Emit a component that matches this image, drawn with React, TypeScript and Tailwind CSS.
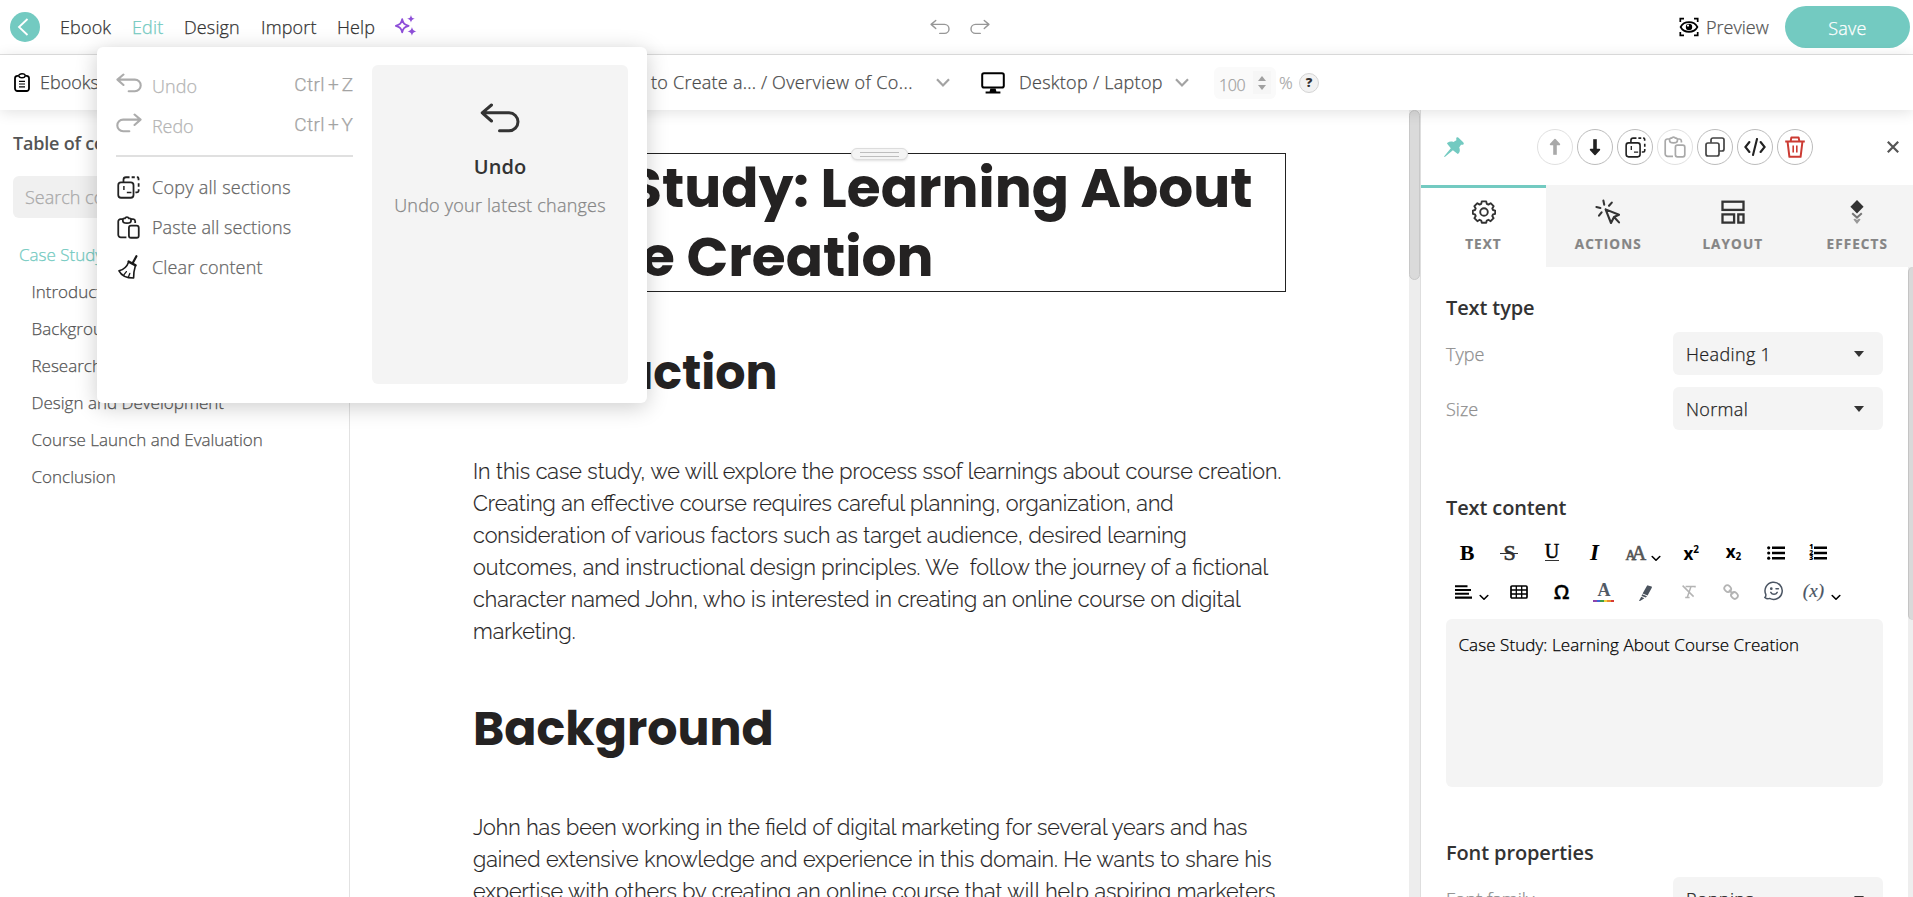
import type { ReactNode } from "react";

function UndoIcon({ className = "", stroke = 3 }: { className?: string; stroke?: number }) {
  return (
    <svg viewBox="0 0 40 30" className={className} fill="none" stroke="currentColor" strokeWidth={stroke} strokeLinecap="round" strokeLinejoin="round">
      <path d="M11.5 2 L2.2 9.8 L11.5 18 M2.2 9.8 H29 a9 9 0 0 1 0 18 H19.5" />
    </svg>
  );
}

function Chevron({ className = "" }: { className?: string }) {
  return (
    <svg viewBox="0 0 14 9" className={className} fill="none" stroke="currentColor" strokeWidth="2.2">
      <path d="M1 1.2 L7 7.4 L13 1.2" />
    </svg>
  );
}

function SmallChevron() {
  return (
    <svg viewBox="0 0 10 7" className="mt-[11px] h-[7px] w-[10px] shrink-0" fill="none" stroke="#000" strokeWidth="1.6" strokeLinecap="round" strokeLinejoin="round">
      <path d="M1.2 1.5 L5 5.2 L8.8 1.5" />
    </svg>
  );
}

function CopySectionsIcon({ className = "" }: { className?: string }) {
  return (
    <svg viewBox="0 0 22 22" className={className} fill="none" stroke="currentColor" strokeWidth="1.7">
      <rect x="1.2" y="6.2" width="14.6" height="14.6" rx="2.6" />
      <path d="M6.2 6 V3.6 a2.4 2.4 0 0 1 2.4 -2.4 H12 M14 1.2 h3 M19 1.2 h0.4 a1.2 1.2 0 0 1 1.2 1.2 V4 M20.7 7 v3.2 M20.7 12.6 v1.6 a1.5 1.5 0 0 1 -1.5 1.5 h-1.6" />
      <path d="M6.6 9.5 v4 M9.4 15.8 h4.4" strokeWidth="1.4" />
    </svg>
  );
}

function PasteSectionsIcon({ className = "" }: { className?: string }) {
  return (
    <svg viewBox="0 0 22 22" className={className} fill="none" stroke="currentColor" strokeWidth="1.7" strokeLinejoin="round">
      <path d="M5.6 3 H3.4 a2.2 2.2 0 0 0 -2.2 2.2 V18 a2.4 2.4 0 0 0 2.4 2.4 H9 M13.4 3 h2 a2.2 2.2 0 0 1 2 2 V6.6" />
      <path d="M5.6 4.8 a3.8 2 0 0 0 7.8 0 V3.4 a1.2 1.2 0 0 0 -1.2 -1.2 h-.8 a2 1.5 0 0 0 -3.8 0 h-.8 a1.2 1.2 0 0 0 -1.2 1.2 Z" />
      <rect x="11.4" y="9.2" width="9.4" height="11.6" rx="2" />
    </svg>
  );
}

function BroomIcon() {
  return (
    <svg viewBox="0 0 20 24" className="h-6 w-5" fill="none" stroke="#1a1a1a" strokeLinejoin="round" strokeLinecap="round">
      <path d="M18.4 1.2 L15 7.6" strokeWidth="2.2" />
      <path d="M10.6 6.6 L17.6 10.4" strokeWidth="2.4" />
      <path d="M10.4 7.4 C9 11.5 5.5 14.5 1 15.8 C3.4 20.5 9 23 15.6 23 C15.6 19 16 15 17.2 11.4" strokeWidth="1.6" />
      <path d="M6 19.6 l2.4 -3 M10.6 21.6 l1.2 -3.2" strokeWidth="1.3" />
    </svg>
  );
}

function ClipboardIcon() {
  return (
    <svg viewBox="0 0 16 19" className="h-[19px] w-4" fill="none" stroke="#000" strokeWidth="1.8">
      <path d="M4.6 2.8 H3.4 a2.4 2.4 0 0 0 -2.4 2.4 V15.6 a2.4 2.4 0 0 0 2.4 2.4 H12.6 a2.4 2.4 0 0 0 2.4 -2.4 V5.2 a2.4 2.4 0 0 0 -2.4 -2.4 H11.4" />
      <path d="M4.8 2.6 a3.2 1.8 0 0 1 6.4 0 a3.2 2.2 0 0 1 -6.4 0 Z" strokeWidth="1.4" />
      <path d="M5 8.4 H11 M5 11 H11 M5 13.8 H11" strokeWidth="1.2" />
    </svg>
  );
}

function PreviewIcon() {
  return (
    <svg viewBox="0 0 20 20" className="h-5 w-5" fill="none" stroke="#000" strokeWidth="1.7">
      <path d="M1.3 5 V1.7 H5 M15 1.7 H18.7 V5 M18.7 15 V18.3 H15 M5 18.3 H1.3 V15" />
      <path d="M1.6 10 C5 3.6 15 3.6 18.4 10 C15 16.4 5 16.4 1.6 10 Z" />
      <circle cx="10" cy="10" r="3.2" fill="#000" stroke="none" />
      <circle cx="9" cy="8.6" r="1.1" fill="#fff" stroke="none" />
    </svg>
  );
}

function MenuRow({ icon, label, keys, className }: { icon: ReactNode; label: string; keys?: string; className: string }) {
  return (
    <div className="flex h-10 items-center">
      <span className="flex w-9 shrink-0 justify-start">{icon}</span>
      <span className={className}>{label}</span>
      {keys ? (
        <span className="ml-auto flex items-center gap-[3px] pt-px font-['Roboto'] text-[19px] font-light text-[#a3a3a3]">
          <span className="tracking-[0.4px]">Ctrl</span>
          <span>+</span>
          <span>{keys}</span>
        </span>
      ) : null}
    </div>
  );
}

function EditMenu() {
  return (
    <div className="absolute top-[47px] left-[97px] z-20 flex h-[356px] w-[550px] rounded-md bg-white pt-[18px] pl-[19px] shadow-[0_4px_22px_rgba(0,0,0,0.2)]">
      <div className="w-[237px]">
        <MenuRow icon={<UndoIcon className="mb-1 h-[20px] w-[26px] text-[#acacac]" stroke={3.2} />} label="Undo" keys="Z" className="pt-[3px] text-[18px] text-[#b4b4b4] tracking-[0.1px]" />
        <MenuRow icon={<UndoIcon className="mb-1 h-[20px] w-[26px] -scale-x-100 text-[#acacac]" stroke={3.2} />} label="Redo" keys="Y" className="pt-[3px] text-[18px] text-[#b4b4b4] tracking-[-0.1px]" />
        <div className="mt-[10px] mb-[10px] h-[2px] bg-[#e0e0e0]" />
        <MenuRow icon={<CopySectionsIcon className="ml-[1px] h-[23px] w-[23px] text-[#222]" />} label="Copy all sections" className="text-[18px] tracking-[0.27px] text-[#666]" />
        <MenuRow icon={<PasteSectionsIcon className="ml-[1px] h-[23px] w-[23px] text-[#222]" />} label="Paste all sections" className="text-[18px] tracking-[0.07px] text-[#666]" />
        <MenuRow icon={<span className="ml-[2px]"><BroomIcon /></span>} label="Clear content" className="text-[18px] tracking-[0.15px] text-[#666]" />
      </div>
      <div className="ml-[19px] flex h-[319px] w-[256px] flex-col items-center rounded-md bg-[#f4f4f4] pt-[38px]">
        <UndoIcon className="h-[30px] w-10 text-[#333]" stroke={3} />
        <div className="mt-[19px] text-[20px] leading-[30px] font-semibold tracking-[0.1px] text-[#333] [-webkit-text-stroke:0]">Undo</div>
        <div className="mt-[8px] text-[18px] leading-[30px] tracking-[0.23px] whitespace-nowrap text-[#868686]">Undo your latest changes</div>
      </div>
    </div>
  );
}

function TopBar() {
  return (
    <header className="flex h-[55px] shrink-0 items-center border-b border-[#e2e2e2] pr-[3px] pl-[10px]">
      <div className="flex h-[30px] w-[30px] items-center justify-center rounded-full bg-[#73cac1]">
        <svg viewBox="0 0 12 18" className="mr-[3px] h-[18px] w-3" fill="none" stroke="#fff" strokeWidth="1.8">
          <path d="M10.5 1 L2 9 L10.5 17" />
        </svg>
      </div>
      <nav className="ml-5 flex text-[18px] tracking-[0.15px] text-[#333]">
        <span className="w-[72px]">Ebook</span>
        <span className="w-[52px] text-[#73cac1]">Edit</span>
        <span className="w-[77px]">Design</span>
        <span className="w-[76px]">Import</span>
        <span className="w-[58px]">Help</span>
      </nav>
      <svg viewBox="0 0 22 22" className="-mt-[3px] h-[22px] w-[22px]" fill="#8e4fd8">
        <path d="M7.2 4.2 C8.1 8.3 9.2 9.6 13.6 10.8 C9.2 12 8.1 13.3 7.2 17.4 C6.3 13.3 5.2 12 0.8 10.8 C5.2 9.6 6.3 8.3 7.2 4.2 Z" fill="none" stroke="#8e4fd8" strokeWidth="1.8" strokeLinejoin="round" />
        <path d="M16 0 C16.6 2.6 17.2 3.2 19.8 3.8 C17.2 4.4 16.6 5 16 7.6 C15.4 5 14.8 4.4 12.2 3.8 C14.8 3.2 15.4 2.6 16 0 Z" />
        <path d="M17 12 C17.7 15 18.5 15.7 21.5 16.4 C18.5 17.1 17.7 17.8 17 20.8 C16.3 17.8 15.5 17.1 12.5 16.4 C15.5 15.7 16.3 15 17 12 Z" />
      </svg>
      <div className="ml-[513px] flex w-[750px] gap-5 text-[#979797]">
        <UndoIcon className="h-4 w-5" stroke={2.8} />
        <UndoIcon className="h-4 w-5 -scale-x-100" stroke={2.8} />
      </div>
      <div className="ml-auto flex items-center">
        <PreviewIcon />
        <span className="ml-[7px] w-[79px] text-[18px] text-[#555]">Preview</span>
        <button className="h-[42px] w-[125px] rounded-full bg-[#73cac1] pt-[2px] text-[18px] tracking-[0.2px] text-white">Save</button>
      </div>
    </header>
  );
}

function SubBar() {
  return (
    <div className="relative z-10 flex h-[55px] shrink-0 items-center bg-white text-[18px] whitespace-nowrap text-[#4a4a4a] shadow-[0_2px_14px_rgba(0,0,0,0.12)]">
      <span className="ml-[14px]"><ClipboardIcon /></span>
      <span className="ml-[10px] w-[611px]">Ebooks</span>
      <span className="w-[110px] tracking-[0.25px]">to Create a...</span>
      <span className="w-[11px]">/</span>
      <span className="w-[164px] tracking-[0.4px]">Overview of Co...</span>
      <Chevron className="h-[9px] w-[14px] text-[#a3a3a3]" />
      <svg viewBox="0 0 24 22" className="ml-[31px] h-[22px] w-6">
        <rect x="1.2" y="1.2" width="21.6" height="14.4" rx="1.8" fill="none" stroke="#000" strokeWidth="2" />
        <path d="M9.4 16.5 h5.2 l.8 3 h4 v2 H4.6 v-2 h4 Z" />
      </svg>
      <span className="ml-[14px] w-[156px] tracking-[0.28px]">Desktop / Laptop</span>
      <Chevron className="h-[9px] w-[14px] text-[#a3a3a3]" />
      <div className="ml-[25px] flex h-8 w-[62px] items-center rounded-md bg-[#fafafa] pl-[5px]">
        <span className="w-[34px] pt-[4px] text-[16px] tracking-[-0.4px] text-[#a0a0a0]">100</span>
        <span className="flex h-[23px] w-[18px] flex-col items-center justify-center gap-1 bg-[#f6f6f6]">
          <svg viewBox="0 0 8 5" className="h-[5px] w-2" fill="#a0a0a0"><path d="M0 5 L4 0 L8 5 Z" /></svg>
          <svg viewBox="0 0 8 5" className="h-[5px] w-2" fill="#a0a0a0"><path d="M0 0 L4 5 L8 0 Z" /></svg>
        </span>
      </div>
      <span className="ml-[3px] w-5 text-[17px] text-[#a8a8a8]">%</span>
      <span className="flex h-5 w-5 items-center justify-center rounded-full border border-[#d4d4d4] bg-[#f2f2f2] text-[13px] leading-none font-extrabold text-[#333] [-webkit-text-stroke:0]">?</span>
    </div>
  );
}

const chapters = ["Introduction", "Background", "Research and Analysis", "Design and Development", "Course Launch and Evaluation", "Conclusion"];

function Sidebar() {
  return (
    <aside className="flex w-[350px] shrink-0 flex-col border-r border-[#e2e2e2] pt-[18px] pr-[13px] pl-[13px]">
      <div className="text-[18px] leading-[30px] font-semibold tracking-[-0.2px] text-[#555] [-webkit-text-stroke:0]">Table of contents</div>
      <div className="mt-[18px] flex h-[42px] items-center rounded-md bg-[#f0f0f0] pl-3 text-[18px] text-[#a9a9a9]">Search content</div>
      <div className="mt-[18px] pl-[6px] text-[17px] leading-[37px] whitespace-nowrap text-[#555]">
        <div className="text-[#73cac1]">Case Study: Learning About Course</div>
        <div className="pl-[12.5px]">
          {chapters.map((c) => (
            <div key={c}>{c}</div>
          ))}
        </div>
      </div>
    </aside>
  );
}

function Document() {
  return (
    <main className="flex min-w-0 flex-1 flex-col pt-[43px] pl-[122px] whitespace-nowrap text-[#242222] [-webkit-text-stroke:0]">
      <section className="relative h-[139px] w-[814px] border border-[#222] font-['Poppins','Inter',sans-serif] text-[54.93px] leading-[69px] font-bold">
        <div className="absolute -top-[6px] left-[378px] flex h-[12px] w-[57px] flex-col items-center justify-center gap-[3px] rounded-full border border-[#dcdcdc] bg-[#f4f4f4] shadow-sm">
          <span className="h-px w-[39px] bg-[#bdbdbd]" />
          <span className="h-px w-[39px] bg-[#bdbdbd]" />
        </div>
        <div className="-mt-px">Case Study: Learning About</div>
        <div>Course Creation</div>
      </section>
      <div className="pl-[1px]">
        <h2 className="mt-[51px] font-['Poppins','Inter',sans-serif] text-[47.5px] leading-[60px] font-bold">Introduction</h2>
        <div className="mt-[53px] font-['Raleway','Lato',sans-serif] text-[21.54px] leading-8 font-light [-webkit-text-stroke:0.2px]">
          <p>In this case study, we will explore the process ssof learnings about course creation.</p>
          <p>Creating an effective course requires careful planning, organization, and</p>
          <p>consideration of various factors such as target audience, desired learning</p>
          <p>outcomes, and instructional design principles. We&nbsp; follow the journey of a fictional</p>
          <p>character named John, who is interested in creating an online course on digital</p>
          <p>marketing.</p>
        </div>
        <h2 className="mt-[51px] font-['Poppins','Inter',sans-serif] text-[47.5px] leading-[60px] font-bold">Background</h2>
        <div className="mt-[53px] font-['Raleway','Lato',sans-serif] text-[21.54px] leading-8 font-light [-webkit-text-stroke:0.2px]">
          <p>John has been working in the field of digital marketing for several years and has</p>
          <p>gained extensive knowledge and experience in this domain. He wants to share his</p>
          <p>expertise with others by creating an online course that will help aspiring marketers</p>
        </div>
      </div>
    </main>
  );
}

function RoundButton({ faded = false, children }: { faded?: boolean; children: ReactNode }) {
  return (
    <button className={faded ? "flex h-9 w-9 items-center justify-center rounded-full border border-[#e0e0e0] text-[#a9a9a9]" : "flex h-9 w-9 items-center justify-center rounded-full border border-[#bcbcbc] text-[#222]"}>
      {children}
    </button>
  );
}

function PanelHeader() {
  return (
    <div className="flex h-[75px] shrink-0 items-center pr-[14px] pb-px pl-[23px]">
      <svg viewBox="0 0 20 20" className="h-5 w-5" fill="#73cac1">
        <path d="M12.6 0.6 C13.3 -0.1 14.3 0.3 14.8 0.9 L19.2 5.3 C19.9 6 20.1 7.2 19.2 7.6 C18.4 8 17.5 7.6 17 7.7 L15.2 10.6 C16.2 12.6 16 15 14.4 16.6 C13.9 17.1 13.5 16.9 13.1 16.5 L8.9 13.2 L0.8 20 L0 19.4 L6.8 11.2 L3.4 7 C2.9 6.5 3 6.1 3.5 5.8 C5.3 4.4 7.4 4.2 9.4 5 L12.4 3.2 C12.4 2.3 11.9 1.4 12.6 0.6 Z" />
      </svg>
      <div className="ml-[73px] flex gap-1">
        <RoundButton faded>
          <svg viewBox="0 0 12 18" className="h-[18px] w-3" fill="none" stroke="currentColor" strokeLinejoin="round">
            <path d="M6 16.8 V6" strokeWidth="3.6" /><path d="M1.6 6.4 L6 1.6 L10.4 6.4 Z" fill="currentColor" strokeWidth="1.6" />
          </svg>
        </RoundButton>
        <RoundButton>
          <svg viewBox="0 0 12 18" className="h-[18px] w-3" fill="none" stroke="currentColor" strokeLinejoin="round">
            <path d="M6 1.2 V12" strokeWidth="3.6" /><path d="M1.6 11.6 L6 16.4 L10.4 11.6 Z" fill="currentColor" strokeWidth="1.6" />
          </svg>
        </RoundButton>
        <RoundButton><CopySectionsIcon className="h-[21px] w-[21px]" /></RoundButton>
        <RoundButton faded><PasteSectionsIcon className="h-[22px] w-[22px]" /></RoundButton>
        <RoundButton>
          <svg viewBox="0 0 20 20" className="h-5 w-5" fill="none" stroke="#444" strokeWidth="1.7">
            <rect x="1" y="6" width="13" height="13" rx="2" />
            <path d="M6 5.8 V3 a2 2 0 0 1 2 -2 H17 a2 2 0 0 1 2 2 V12 a2 2 0 0 1 -2 2 H14.2" />
          </svg>
        </RoundButton>
        <RoundButton>
          <svg viewBox="0 0 22 18" className="h-[18px] w-[22px]" fill="none" stroke="currentColor" strokeWidth="2.1" strokeLinecap="round">
            <path d="M5.4 4 L1.4 9 L5.4 14 M16.6 4 L20.6 9 L16.6 14 M13 1 L9 17" />
          </svg>
        </RoundButton>
        <RoundButton>
          <svg viewBox="0 0 20 22" className="-mt-[1px] h-[22px] w-5" fill="none" stroke="#cc3b33" strokeWidth="2" strokeLinejoin="round">
            <path d="M0.2 5.6 H19.8 M5.6 5.4 L6.4 1.4 H13.6 L14.4 5.4 M2.6 6 L4.4 20.8 H15.6 L17.4 6" />
            <path d="M8.2 9.6 V16.6 M11.8 9.6 V16.6" strokeWidth="1.6" />
          </svg>
        </RoundButton>
      </div>
      <svg viewBox="0 0 12 12" className="ml-auto h-3 w-3" fill="none" stroke="#555" strokeWidth="2.2">
        <path d="M0.8 0.8 L11.2 11.2 M11.2 0.8 L0.8 11.2" />
      </svg>
    </div>
  );
}

function Tab({ label, active = false, children }: { label: string; active?: boolean; children: ReactNode }) {
  return (
    <div className={active ? "flex w-[125px] shrink-0 flex-col items-center border-t-[3px] border-[#73cac1] bg-white pt-3" : "flex w-[124.5px] shrink-0 flex-col items-center bg-[#f4f4f4] pt-[15px]"}>
      {children}
      <span className="mt-2 text-[13.5px] leading-[24px] font-bold tracking-[1.1px] text-[#858585] [-webkit-text-stroke:0.2px]">{label}</span>
    </div>
  );
}

function Tabs() {
  return (
    <div className="flex h-[82px] shrink-0 overflow-hidden bg-[#f4f4f4]">
      <Tab label="TEXT" active>
        <svg viewBox="0 0 24 24" className="h-6 w-6" fill="none" stroke="#333" strokeWidth="1.9" strokeLinejoin="round">
          <path d="M9.8 1.4 h4.4 l.6 2.5 1.6 .7 2.2 -1.4 3 3 -1.3 2.2 .7 1.6 2.2 .6 v3.2 l-2.2 .6 -.7 1.6 1.3 2.2 -3 3 -2.2 -1.4 -1.6 .7 -.6 2.3 h-4.4 l-.6 -2.3 -1.6 -.7 -2.2 1.4 -3 -3 1.3 -2.2 -.7 -1.6 -2.2 -.6 v-3.2 l2.2 -.6 .7 -1.6 -1.3 -2.2 3 -3 2.2 1.4 1.6 -.7 Z" />
          <circle cx="12" cy="12" r="3.8" />
        </svg>
      </Tab>
      <Tab label="ACTIONS">
        <svg viewBox="0 0 26 26" className="-mt-px mb-[-1px] h-[26px] w-[26px]" fill="none" stroke="#333" strokeWidth="2.1" strokeLinejoin="round" strokeLinecap="round">
          <path d="M10.6 10.4 L24 15.8 L19 18 L24 23.4 M19 18 L16 24 L10.6 10.4" />
          <path d="M8.4 1.6 L9.2 5.6 M16.8 3.6 L14 6.8 M1.4 8 L5.4 9 M6.6 13.4 L4 16.6" />
        </svg>
      </Tab>
      <Tab label="LAYOUT">
        <svg viewBox="0 0 24 24" className="h-6 w-6" fill="none" stroke="#333" strokeWidth="2.3">
          <rect x="1.5" y="1.7" width="21" height="8.2" /><rect x="1.5" y="14.4" width="11.6" height="8.2" /><rect x="17.3" y="14.4" width="5.2" height="8.2" />
        </svg>
      </Tab>
      <Tab label="EFFECTS">
        <svg viewBox="0 0 14 24" className="h-6 w-[14px]">
          <path d="M7 0 L13.6 6.8 L7 13.4 L.4 6.8 Z" fill="#333" />
          <path d="M2.2 13.2 L7 17.6 L11.8 13.2" fill="none" stroke="#777" strokeWidth="2" />
          <path d="M3.4 19.6 L5 18.6 L7 20 L9 18.6 L10.6 19.6 L7 24 Z" fill="#999" />
        </svg>
      </Tab>
    </div>
  );
}

function Field({ label, value, className = "" }: { label: string; value: string; className?: string }) {
  return (
    <div className={`flex h-[43px] items-center justify-between text-[18px] ${className}`}>
      <span className="pt-px text-[#8f8f8f]">{label}</span>
      <div className="flex h-full w-[210px] items-center justify-between rounded-md bg-[#f4f4f4] pt-px pr-[19px] pl-[13px] tracking-[0.35px] text-[#222]">
        <span>{value}</span>
        <svg viewBox="0 0 10 6" className="h-[6px] w-[10px]" fill="#333"><path d="M0 0 H10 L5 6 Z" /></svg>
      </div>
    </div>
  );
}

function Tool({ children }: { children: ReactNode }) {
  return <span className="flex w-[42.4px] shrink-0 items-center justify-center">{children}</span>;
}

function Toolbar() {
  return (
    <div className="mt-[11px] text-black [-webkit-text-stroke:0]">
      <div className="flex h-[39px]">
        <Tool><span className="font-['Liberation_Serif'] text-[22px] leading-none font-bold">B</span></Tool>
        <Tool><span className="relative font-['Liberation_Serif'] text-[22px] leading-none text-[#333] [-webkit-text-stroke:0.6px]">S<span className="absolute top-[11px] -left-[3px] h-[1.5px] w-[18px] bg-[#333]" /></span></Tool>
        <Tool><span className="border-b border-[#333] pb-px font-['Liberation_Serif'] text-[20px] leading-[15px] [-webkit-text-stroke:0.5px]">U</span></Tool>
        <Tool><span className="font-['Liberation_Serif'] text-[23px] leading-none font-bold italic">I</span></Tool>
        <span className="flex w-[54.4px] shrink-0 items-center pl-[10px]">
          <span className="mr-[7px] flex w-[18px] items-baseline font-['Liberation_Serif'] leading-none text-[#555] [-webkit-text-stroke:0.6px]">
            <span className="-mr-[4px] text-[14px]">A</span><span className="text-[20px]">A</span>
          </span>
          <SmallChevron />
        </span>
        <Tool><span className="flex pt-[2px] text-[17px] leading-[18px] font-bold">x<span className="-mt-[5px] text-[10px]">2</span></span></Tool>
        <Tool><span className="flex pt-[2px] text-[17px] leading-[18px] font-bold">x<span className="mt-[4px] text-[10px]">2</span></span></Tool>
        <Tool>
          <svg viewBox="0 0 18 14" className="h-[14px] w-[18px]"><path d="M5 1.8 H18 M5 7 H18 M5 12.2 H18" stroke="#000" strokeWidth="2.4" /><circle cx="1.7" cy="1.8" r="1.6" /><circle cx="1.7" cy="7" r="1.6" /><circle cx="1.7" cy="12.2" r="1.6" /></svg>
        </Tool>
        <Tool>
          <span className="flex items-center gap-[1px]">
            <span className="flex flex-col text-[7px] leading-[5.5px] font-extrabold"><span>1</span><span>2</span><span>3</span></span>
            <svg viewBox="0 0 13 14" className="h-[14px] w-[13px]"><path d="M0 1.8 H13 M0 7 H13 M0 12.2 H13" stroke="#000" strokeWidth="2.4" /></svg>
          </span>
        </Tool>
      </div>
      <div className="flex h-[39px]">
        <span className="flex w-[52px] shrink-0 items-center gap-[7px] pl-[9px]">
          <svg viewBox="0 0 17 14" className="h-[14px] w-[17px]"><path d="M0 1.2 H12.5 M0 5 H16 M0 8.8 H14 M0 12.6 H17" stroke="#000" strokeWidth="2.1" /></svg>
          <SmallChevron />
        </span>
        <Tool>
          <svg viewBox="0 0 18 14" className="h-[14px] w-[18px]" fill="none" stroke="#000" strokeWidth="1.3"><rect x="1" y="1" width="16" height="12" rx="1" strokeWidth="1.7" /><path d="M1 5 H17 M1 9 H17 M6.3 1 V13 M11.7 1 V13" /></svg>
        </Tool>
        <Tool>
          <span className="font-['Open_Sans'] text-[20px] leading-none font-semibold [-webkit-text-stroke:0.3px]">Ω</span>
        </Tool>
        <Tool>
          <span className="flex flex-col items-center pt-[2px]">
            <span className="font-['Liberation_Serif'] text-[18px] leading-[15px] font-bold text-[#515a66]">A</span>
            <span className="mt-[2px] flex h-[2.5px] w-[21px]">
              <span className="flex-1 bg-[#8e44ad]" /><span className="flex-1 bg-[#3c66d6]" /><span className="flex-1 bg-[#3f9b46]" /><span className="flex-1 bg-[#f4d03f]" /><span className="flex-1 bg-[#ec8b2d]" /><span className="flex-1 bg-[#d63a34]" />
            </span>
          </span>
        </Tool>
        <Tool>
          <svg viewBox="0 0 14 16" className="mt-[2px] h-4 w-[14px]" fill="#4b535e"><path d="M8 .8 Q8.4 .2 9 .4 L12.6 1.6 Q13.2 2 12.8 2.8 L8.6 10.4 L3.6 8.4 Z" /><path d="M3.2 9.2 L8 11.2 L6.8 12.6 L2.6 11 Z" /><path d="M2.2 11.8 L5.4 13.2 L1 16 H0 Z" /></svg>
        </Tool>
        <Tool>
          <svg viewBox="0 0 14 14" className="h-[14px] w-[14px]" fill="none" stroke="#b4b4b4" strokeWidth="1.5"><path d="M3.6 1.4 H13 V2.6 M9 1.4 L5.4 12 M3.2 12.4 H7.6 M.6 .6 L11.6 11.6" /></svg>
        </Tool>
        <Tool>
          <svg viewBox="0 0 16 16" className="h-4 w-4" fill="none" stroke="#b4b4b4" strokeWidth="1.8"><rect x="1.2" y="1.6" width="7" height="6" rx="3" transform="rotate(45 4.7 4.6)" /><rect x="7.8" y="8.4" width="7" height="6" rx="3" transform="rotate(45 11.3 11.6)" /><path d="M6 6 L10.2 10.2" /></svg>
        </Tool>
        <Tool>
          <svg viewBox="0 0 20 20" className="-mt-[2px] h-5 w-5" fill="none" stroke="#4b5563" strokeWidth="1.5" strokeLinecap="round"><path d="M1.8 13.4 A8.6 8.6 0 1 1 5.6 17.4 C4.4 18 2.4 17.8 0.8 16.4 C1.8 15.8 2 14.6 1.8 13.4 Z" strokeLinejoin="round" /><path d="M6.8 11.4 A3.6 3.6 0 0 0 13.2 11.4 M12 7.8 H14.4" /><circle cx="7.3" cy="7.7" r=".6" fill="#4b5563" /></svg>
        </Tool>
        <span className="flex w-[56px] shrink-0 items-center gap-[7px] pl-[8px]">
          <span className="-mt-[2px] font-['Liberation_Serif'] text-[19px] leading-none tracking-[0.1px] text-[#4b5563] italic [-webkit-text-stroke:0.2px]">(x)</span>
          <SmallChevron />
        </span>
      </div>
    </div>
  );
}

function Panel() {
  const heading = "text-[20px] leading-[30px] font-semibold tracking-[-0.12px] text-[#333] [-webkit-text-stroke:0]";
  return (
    <aside className="flex w-[493px] shrink-0 flex-col border-l border-[#dedede]">
      <PanelHeader />
      <Tabs />
      <div className="flex min-h-0 flex-1">
        <div className="min-w-0 flex-1 overflow-hidden pt-[26px] pr-[25px] pl-[25px]">
          <h3 className={heading}>Text type</h3>
          <Field label="Type" value="Heading 1" className="mt-[9px]" />
          <Field label="Size" value="Normal" className="mt-3" />
          <h3 className={`mt-[63px] ${heading}`}>Text content</h3>
          <div className="-mt-px"><Toolbar /></div>
          <div className="mt-2 h-[168px] rounded-md bg-[#f4f4f4] pt-[11px] pl-[12.5px] text-[17px] leading-[29px] tracking-[0.07px] whitespace-nowrap text-black">Case Study: Learning About Course Creation</div>
          <h3 className={`mt-[51px] ${heading}`}>Font properties</h3>
          <Field label="Font family" value="Poppins" className="mt-[9px]" />
        </div>
        <div className="w-[5px] bg-[#eeeeee]"><div className="h-[353px] rounded-l-full border-l border-[#c4c4c4] bg-[#d9d9d9]" /></div>
      </div>
    </aside>
  );
}

export default function App() {
  return (
    <div className="relative flex h-[897px] w-full flex-col overflow-hidden bg-white font-['Open_Sans',sans-serif] font-light [-webkit-text-stroke:0.25px]">
      <TopBar />
      <SubBar />
      <div className="flex min-h-0 flex-1">
        <Sidebar />
        <Document />
        <div className="w-[11px] shrink-0 bg-[#ededed]"><div className="h-[170px] rounded-md border border-[#c8c8c8] bg-[#dadada]" /></div>
        <Panel />
      </div>
      <EditMenu />
    </div>
  );
}
